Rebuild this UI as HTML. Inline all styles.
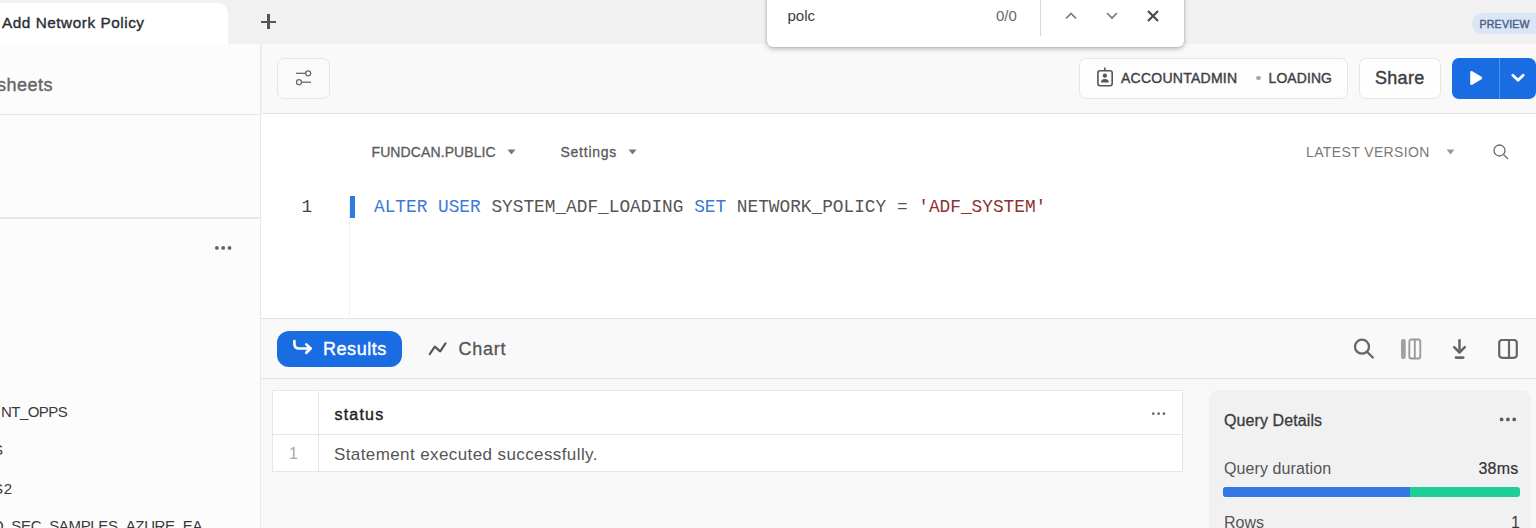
<!DOCTYPE html>
<html><head><meta charset="utf-8">
<style>
*{box-sizing:border-box;margin:0;padding:0}
html,body{width:1536px;height:528px;overflow:hidden;background:#fff;font-family:"Liberation Sans",sans-serif;position:relative}
.a{position:absolute;white-space:pre}
#tabbar{left:0;top:0;width:1536px;height:44px;background:#f1f1f1}
#tab{left:-20px;top:3px;width:248px;height:41px;background:#fff;border-radius:0 10px 0 0}
#sidebar{left:0;top:44px;width:261px;height:484px;background:#fcfcfc;border-right:1px solid #e8e8e8}
#toolbar{left:261px;top:44px;width:1275px;height:70px;background:#f9f9f9;border-bottom:1px solid #e3e3e3}
#editor{left:261px;top:114px;width:1275px;height:205px;background:#fff;border-bottom:1px solid #e3e3e3}
#resbar{left:261px;top:319px;width:1275px;height:60px;background:#f9f9f9;border-bottom:1px solid #e3e3e3}
#resbody{left:261px;top:379px;width:1275px;height:149px;background:#f8f8f8}
.sb{-webkit-text-stroke:0.4px currentColor}
.md{-webkit-text-stroke:0.2px currentColor}
.mono{font-family:"Liberation Mono",monospace}
</style></head><body>
<div class="a" id="tabbar"></div>
<div class="a" id="tab"></div>
<div class="a sb" style="left:2px;top:14px;font-size:15.3px;color:#2c2f36;letter-spacing:0.55px">Add Network Policy</div>
<!-- plus -->
<div class="a" style="left:261px;top:20.5px;width:15px;height:2.4px;background:#555"></div>
<div class="a" style="left:267.3px;top:14px;width:2.4px;height:15px;background:#555"></div>
<!-- preview pill -->
<div class="a" style="left:1472px;top:12.5px;width:80px;height:21.5px;border-radius:11px;background:#dae5f6"></div>
<div class="a sb" style="left:1479.5px;top:17.5px;font-size:10.6px;color:#4a5f80;letter-spacing:0.2px">PREVIEW</div>

<div class="a" id="sidebar"></div>
<div class="a" style="left:0;top:114px;width:261px;height:1px;background:#e6e6e6"></div>
<div class="a" style="left:0;top:217px;width:261px;height:2px;background:#e8e8e8"></div>
<div class="a sb" style="left:-3px;top:74.5px;font-size:18px;color:#666;letter-spacing:0.5px">sheets</div>
<svg class="a" style="left:210px;top:240px" width="26" height="16" viewBox="0 0 26 16" fill="#636363"><circle cx="6.9" cy="7.9" r="1.95"/><circle cx="13.2" cy="7.9" r="1.95"/><circle cx="19.5" cy="7.9" r="1.95"/></svg>
<div class="a" style="left:1px;top:403px;font-size:15px;color:#3a3a3a;letter-spacing:-0.55px">NT_OPPS</div>
<div class="a" style="left:-7px;top:441px;font-size:15px;color:#3a3a3a">S</div>
<div class="a" style="left:-7px;top:480px;font-size:15px;color:#3a3a3a;letter-spacing:0.8px">S2</div>
<div class="a" style="left:-8px;top:516.5px;font-size:15px;color:#3a3a3a;letter-spacing:-0.34px">O_SEC_SAMPLES_AZURE_EA</div>

<div class="a" id="toolbar"></div>
<div class="a" style="left:261px;top:44px;width:1px;height:484px;background:#f1f1f1"></div>
<div class="a" style="left:277px;top:58px;width:53px;height:41px;border:1px solid #e5e5e5;border-radius:7px;background:#fafafa"></div>
<svg class="a" style="left:291px;top:66px" width="24" height="24" viewBox="0 0 24 24" fill="none" stroke="#6a6a6a" stroke-width="1.3">
<line x1="5" y1="7.3" x2="14.8" y2="7.3"/><circle cx="17.2" cy="7.3" r="2.5"/>
<circle cx="8" cy="16.2" r="2.5"/><line x1="10.4" y1="16.2" x2="20" y2="16.2"/>
</svg>

<div class="a" style="left:1079px;top:58px;width:269px;height:41px;border:1px solid #e6e6e6;border-radius:7px;background:#fdfdfd"></div>
<svg class="a" style="left:1096px;top:67px" width="20" height="22" viewBox="0 0 20 22" fill="none" stroke="#555" stroke-width="1.6">
<rect x="1.9" y="3.8" width="14.3" height="15" rx="2.2"/><line x1="8.9" y1="0.4" x2="8.9" y2="3.8"/>
<circle cx="8.9" cy="8.7" r="2.1" fill="#555" stroke="none"/>
<path d="M5 15.6 C5 13 6.6 12 8.9 12 C11.2 12 12.8 13 12.8 15.6 Z" fill="#555" stroke="none"/>
</svg>
<div class="a sb" style="left:1121px;top:70px;font-size:14px;color:#3c3f45;letter-spacing:0.25px">ACCOUNTADMIN</div>
<div class="a" style="left:1256.3px;top:75.5px;width:4.6px;height:4.6px;border-radius:3px;background:#aaa"></div>
<div class="a sb" style="left:1268.5px;top:69.7px;font-size:13.9px;color:#3c3f45;letter-spacing:0.15px">LOADING</div>

<div class="a" style="left:1359px;top:58px;width:82px;height:41px;border:1px solid #e6e6e6;border-radius:7px;background:#fefefe"></div>
<div class="a sb" style="left:1375px;top:68px;font-size:18px;color:#3a3d42;letter-spacing:0.3px">Share</div>

<div class="a" style="left:1452px;top:58px;width:84px;height:41px;border-radius:7px;background:#1a6ce3"></div>
<div class="a" style="left:1499px;top:58px;width:1.3px;height:41px;background:#5594ee"></div>
<svg class="a" style="left:1468px;top:69px" width="18" height="18" viewBox="0 0 18 18"><path d="M3.6 3.4 L12.8 9 L3.6 14.6 Z" fill="#fff" stroke="#fff" stroke-width="2.8" stroke-linejoin="round"/></svg>
<svg class="a" style="left:1510px;top:71px" width="16" height="12" viewBox="0 0 16 12"><path d="M2.8 4.2 L8 9.2 L13.2 4.2" fill="none" stroke="#fff" stroke-width="2.8" stroke-linecap="round" stroke-linejoin="round"/></svg>

<div class="a" id="editor"></div>
<div class="a" style="left:349px;top:196px;width:1px;height:123px;background:#f0f0f0"></div>
<div class="a" style="left:371.5px;top:144px;font-size:14px;color:#5b5b5b;-webkit-text-stroke:0.3px #5b5b5b;letter-spacing:0.1px">FUNDCAN.PUBLIC</div>
<svg class="a" style="left:507px;top:149px" width="9" height="6" viewBox="0 0 9 6"><path d="M0.5 0.5 L8.5 0.5 L4.5 5.5Z" fill="#777"/></svg>
<div class="a" style="left:560.5px;top:144px;font-size:14px;color:#5b5b5b;-webkit-text-stroke:0.3px #5b5b5b;letter-spacing:0.75px">Settings</div>
<svg class="a" style="left:628px;top:149px" width="9" height="6" viewBox="0 0 9 6"><path d="M0.5 0.5 L8.5 0.5 L4.5 5.5Z" fill="#777"/></svg>
<div class="a" style="left:1306px;top:144px;font-size:14px;color:#7a7a7a;letter-spacing:0.38px">LATEST VERSION</div>
<svg class="a" style="left:1446px;top:149px" width="9" height="6" viewBox="0 0 9 6"><path d="M0.5 0.5 L8.5 0.5 L4.5 5.5Z" fill="#999"/></svg>
<svg class="a" style="left:1492px;top:143px" width="18" height="18" viewBox="0 0 18 18" fill="none" stroke="#6a6a6a" stroke-width="1.3"><circle cx="7.5" cy="7.5" r="5.5"/><line x1="11.5" y1="11.5" x2="16" y2="16"/></svg>

<div class="a mono" style="left:301.5px;top:197px;font-size:17.8px;color:#444">1</div>
<div class="a" style="left:350px;top:196px;width:5px;height:22px;background:#2f7be5"></div>
<div class="a mono" style="left:374px;top:197px;font-size:17.8px;color:#555"><span style="color:#3c79d4">ALTER</span> <span style="color:#3c79d4">USER</span> SYSTEM_ADF_LOADING <span style="color:#3c79d4">SET</span> NETWORK_POLICY = <span style="color:#8d3030">'ADF_SYSTEM'</span></div>

<div class="a" id="resbar"></div>
<div class="a" style="left:277px;top:331px;width:125px;height:36px;border-radius:12px;background:#1a6ce3"></div>
<svg class="a" style="left:291px;top:338px" width="22" height="18" viewBox="0 0 22 18" fill="none" stroke="#fff" stroke-width="2.7" stroke-linecap="round" stroke-linejoin="round"><path d="M3.4 3.2 V5.8 Q3.4 10.5 8 10.5 H19.5"/><path d="M15.3 6.4 L19.5 10.5 L15.3 14.8"/></svg>
<div class="a sb" style="left:323px;top:339px;font-size:18px;color:#fff;letter-spacing:0.55px">Results</div>
<svg class="a" style="left:427px;top:340px" width="20" height="16" viewBox="0 0 20 16" fill="none" stroke="#555" stroke-width="2.2" stroke-linejoin="round"><path d="M2.8 14 L7.8 6.6 L13.2 11.3 L18.5 3.3" stroke-linecap="round"/></svg>
<div class="a" style="left:458.5px;top:339px;font-size:18px;color:#555;-webkit-text-stroke:0.3px #555;letter-spacing:0.75px">Chart</div>

<svg class="a" style="left:1352px;top:337px" width="23" height="23" viewBox="0 0 23 23" fill="none" stroke="#666" stroke-width="2.3" stroke-linecap="round"><circle cx="10" cy="9.7" r="7"/><line x1="15" y1="14.7" x2="20.8" y2="20.5"/></svg>
<svg class="a" style="left:1400px;top:338px" width="22" height="22" viewBox="0 0 22 22" fill="none" stroke="#999" stroke-width="1.8"><rect x="1" y="1" width="4.7" height="20" rx="2" fill="#a0a0a0" stroke="none"/><rect x="9.3" y="1.5" width="11" height="19" rx="2"/><line x1="14.8" y1="1.5" x2="14.8" y2="20.5"/></svg>
<svg class="a" style="left:1451px;top:338px" width="17" height="22" viewBox="0 0 17 22" fill="none" stroke="#666" stroke-width="2.5" stroke-linecap="round" stroke-linejoin="round"><path d="M8.5 2.2 V14"/><path d="M3.2 9.2 L8.5 14.5 L13.8 9.2"/><line x1="5" y1="19.6" x2="12.2" y2="19.6" stroke-width="2.7"/></svg>
<svg class="a" style="left:1497px;top:338px" width="22" height="22" viewBox="0 0 22 22" fill="none" stroke="#666" stroke-width="2.2"><rect x="2.2" y="2" width="17.6" height="17.8" rx="3"/><line x1="12" y1="2" x2="12" y2="19.8"/></svg>

<div class="a" id="resbody"></div>
<div class="a" style="left:272px;top:390px;width:911px;height:82px;background:#fff;border:1px solid #e6e6e6"></div>
<div class="a" style="left:318px;top:390px;width:1px;height:82px;background:#e6e6e6"></div>
<div class="a" style="left:272px;top:434px;width:911px;height:1px;background:#e6e6e6"></div>
<div class="a sb" style="left:334.5px;top:406px;font-size:16px;color:#1e1e1e;letter-spacing:1.2px">status</div>
<svg class="a" style="left:1145px;top:408px" width="26" height="12" viewBox="0 0 26 12" fill="#6a6a6a"><circle cx="8.3" cy="5.7" r="1.35"/><circle cx="13.6" cy="5.7" r="1.35"/><circle cx="18.9" cy="5.7" r="1.35"/></svg>
<div class="a" style="left:289px;top:445px;font-size:16px;color:#aaa">1</div>
<div class="a" style="left:334px;top:444.5px;font-size:17px;color:#555;letter-spacing:0.4px">Statement executed successfully.</div>

<div class="a" style="left:1208.5px;top:390px;width:322.5px;height:150px;border-radius:9px;background:#f1f1f1"></div>
<div class="a" style="left:1224px;top:412px;font-size:16px;color:#3a3a3a;-webkit-text-stroke:0.3px #3a3a3a;letter-spacing:0.1px">Query Details</div>
<svg class="a" style="left:1495px;top:412px" width="26" height="16" viewBox="0 0 26 16" fill="#5a5a5a"><circle cx="6.6" cy="7.4" r="1.85"/><circle cx="12.9" cy="7.4" r="1.85"/><circle cx="19.2" cy="7.4" r="1.85"/></svg>
<div class="a" style="left:1224px;top:460px;font-size:16px;letter-spacing:0.1px;color:#555">Query duration</div>
<div class="a" style="left:1478.5px;top:459.5px;font-size:16px;color:#333;-webkit-text-stroke:0.2px #333;letter-spacing:0.2px">38ms</div>
<div class="a" style="left:1223px;top:487px;width:297px;height:10px;border-radius:3px;background:#1fcf98;overflow:hidden"><div style="width:187px;height:10px;background:#3579e6"></div></div>
<div class="a" style="left:1224px;top:514px;font-size:16px;color:#555">Rows</div>
<div class="a" style="left:1511px;top:514px;font-size:16px;color:#3a3a3a">1</div>

<!-- find popup -->
<div class="a" style="left:767px;top:-8px;width:417px;height:54.5px;background:#fff;border-radius:6px;box-shadow:0 2px 5px rgba(0,0,0,0.25),0 0 1.5px rgba(0,0,0,0.25)"></div>
<div class="a" style="left:787.5px;top:6.5px;font-size:15px;color:#3c3c3c">polc</div>
<div class="a" style="left:996px;top:7px;font-size:15px;color:#666">0/0</div>
<div class="a" style="left:1040px;top:0;width:1px;height:36px;background:#d8d8d8"></div>
<svg class="a" style="left:1064px;top:10px" width="14" height="11" viewBox="0 0 14 11" fill="none" stroke="#777" stroke-width="1.6"><path d="M2 8.5 L7 3.5 L12 8.5"/></svg>
<svg class="a" style="left:1105px;top:10px" width="14" height="11" viewBox="0 0 14 11" fill="none" stroke="#777" stroke-width="1.6"><path d="M2 3 L7 8 L12 3"/></svg>
<svg class="a" style="left:1146px;top:9px" width="14" height="14" viewBox="0 0 14 14" fill="none" stroke="#444" stroke-width="2"><path d="M2 2 L12 12 M12 2 L2 12"/></svg>
</body></html>
